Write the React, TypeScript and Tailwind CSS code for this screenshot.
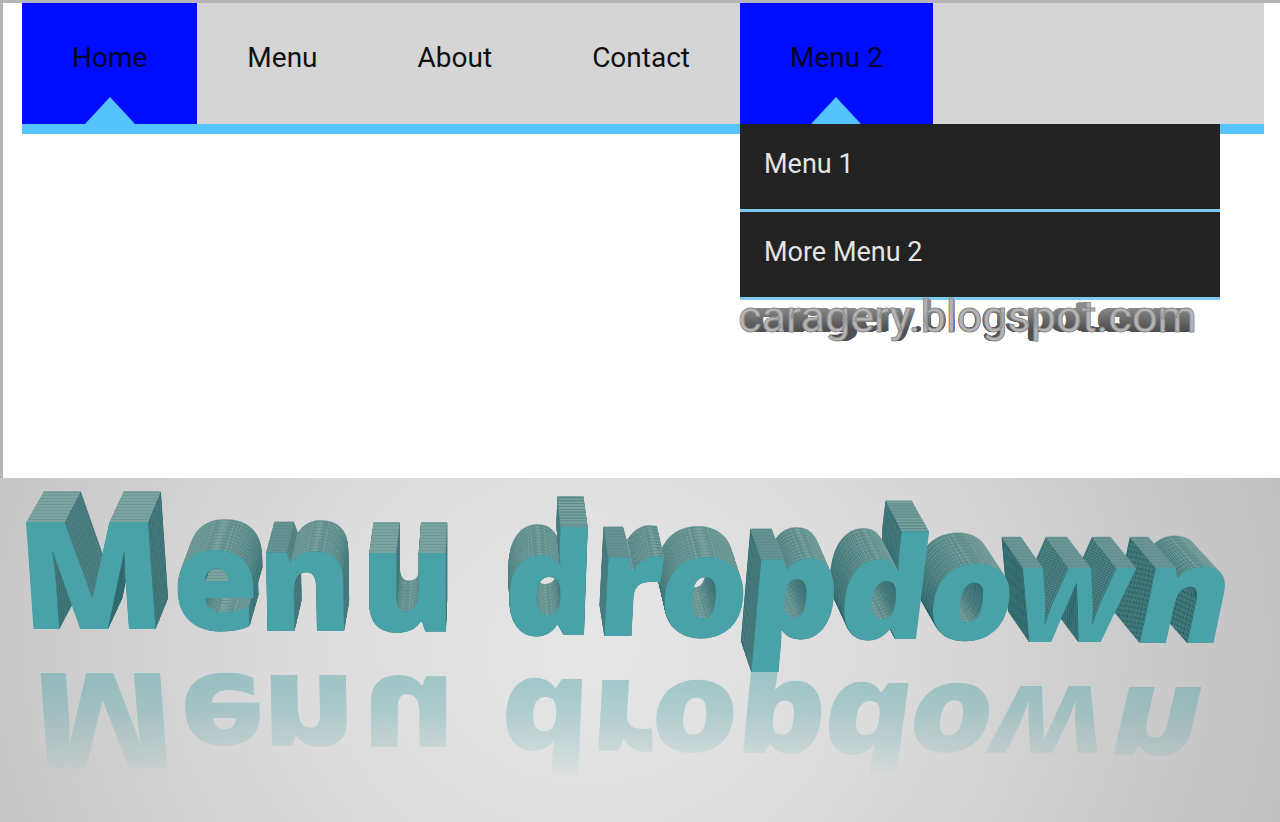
type NavItem = { label: string; active?: boolean; children?: string[] };

const navItems: NavItem[] = [
  { label: "Home", active: true },
  { label: "Menu" },
  { label: "About" },
  { label: "Contact" },
  { label: "Menu 2", active: true, children: ["Menu 1", "More Menu 2"] },
];

type Letter = { char: string; x: number; y: number; skew: number; face: string };

const capital = "text-[150px] font-extrabold";
const near = "text-[142px] font-extrabold";
const far = "text-[136px] font-extrabold";

const titleLetters: Letter[] = [
  { char: "M", x: 22, y: 151, skew: 4, face: capital },
  { char: "e", x: 173, y: 152, skew: 2, face: near },
  { char: "n", x: 258, y: 153, skew: 1, face: near },
  { char: "u", x: 360, y: 154, skew: 0, face: near },
  { char: "d", x: 502, y: 157, skew: -2, face: near },
  { char: "r", x: 595, y: 158, skew: -3, face: near },
  { char: "o", x: 656, y: 159, skew: -4, face: near },
  { char: "p", x: 745, y: 160, skew: -5, face: near },
  { char: "d", x: 834, y: 161, skew: -7, face: near },
  { char: "o", x: 922, y: 162, skew: -9, face: far },
  { char: "w", x: 1007, y: 164, skew: -11, face: "text-[136px] font-bold" },
  { char: "n", x: 1131, y: 165, skew: -12, face: far },
];

const titleDepth = Array.from({ length: 31 }, (_, i) => 31 - i);
const brandDepth = Array.from({ length: 20 }, (_, i) => 20 - i);

function Pointer() {
  return (
    <svg
      viewBox="0 0 50 27"
      className="absolute bottom-0 left-1/2 h-[27px] w-[50px] -translate-x-1/2 fill-[#55c3fd]"
      aria-hidden="true"
    >
      <path d="M25 0 50 27H0Z" />
    </svg>
  );
}

function Brand() {
  return (
    <svg viewBox="0 0 480 56" className="block w-full overflow-visible" role="img" aria-label="caragery.blogspot.com">
      <defs>
        <linearGradient id="brand-side" x1="0" y1="0" x2="0" y2="1">
          <stop offset="0.3" stopColor="#8a8a8a" />
          <stop offset="0.75" stopColor="#505050" />
        </linearGradient>
      </defs>
      {brandDepth.map((d) => {
        const k = 1 - d * 0.0043;
        return (
          <use
            key={d}
            href="#brand-face"
            fill="url(#brand-side)"
            transform={`translate(${225 * (1 - k)} ${24 * (1 - k)}) scale(${k})`}
          />
        );
      })}
      <g fill="#b4b4b4" stroke="#8b8b8b" strokeWidth="0.8">
        <text id="brand-face" x="-2" y="32" className="font-['Roboto',sans-serif] text-[45px]">
          caragery.blogspot.com
        </text>
      </g>
    </svg>
  );
}

function TitleArt() {
  return (
    <svg viewBox="0 0 1280 344" className="block w-full overflow-visible" role="img" aria-label="Menu dropdown">
      <defs>
        <linearGradient id="fade" gradientUnits="userSpaceOnUse" x1="0" y1="189" x2="0" y2="300">
          <stop offset="0" stopColor="#fff" stopOpacity="0.46" />
          <stop offset="0.4" stopColor="#fff" stopOpacity="0.34" />
          <stop offset="1" stopColor="#fff" stopOpacity="0" />
        </linearGradient>
        <mask id="reflection-mask" maskUnits="userSpaceOnUse" x="0" y="0" width="1280" height="344">
          <rect x="0" y="189" width="1280" height="155" fill="url(#fade)" />
        </mask>
      </defs>
      <g mask="url(#reflection-mask)" fill="#49a2a7">
        {titleLetters.map((l, i) => (
          <use
            key={i}
            href={`#letter-${i}`}
            transform={`translate(${480 + (l.x - 480) * 0.984} ${l.y + 44}) scale(0.98 -0.9) skewX(${-l.skew})`}
          />
        ))}
      </g>
      {titleDepth.map((d) => {
        const k = 1 - d * 0.00125;
        const shift = 480 * (1 - k);
        return (
          <g key={d}>
            <use href="#title-face" fill={d % 3 ? "#7da3a0" : "#6c9996"} transform={`translate(${shift} ${-d}) scale(${k} 1)`} />
            <use href="#title-face" fill={d % 3 ? "#27646a" : "#235a5e"} transform={`translate(${shift} ${1 - d}) scale(${k} 1)`} />
          </g>
        );
      })}
      <g fill="#49a2a7">
        <g id="title-face">
          {titleLetters.map((l, i) => (
            <g key={i} transform={`translate(${l.x} ${l.y}) skewX(${l.skew})`}>
              <text id={`letter-${i}`} className={`font-['Open_Sans','Noto_Sans',sans-serif] ${l.face}`}>
                {l.char}
              </text>
            </g>
          ))}
        </g>
      </g>
    </svg>
  );
}

export default function App() {
  return (
    <div className="flex min-h-screen flex-col bg-[#c4c4c4] font-['Roboto',sans-serif]">
      <header className="min-h-[478px] border-t-[3px] border-l-[3px] border-[#b5b5b5] bg-white pr-4 pl-[19px]">
        <nav className="border-b-[10px] border-[#55c3fd] bg-[#d5d5d5]">
          <ul className="flex">
            {navItems.map((item) => (
              <li key={item.label} className="relative">
                <a
                  href="#"
                  className={`relative block h-[121px] px-[50px] text-[28px] leading-[110px] whitespace-nowrap ${
                    item.active ? "bg-[#000cff] text-[#05052c]" : "text-[#111111]"
                  }`}
                >
                  {item.label}
                  {item.active && <Pointer />}
                </a>
                {item.children && (
                  <div className="absolute top-full left-0 w-[480px]">
                    <ul>
                      {item.children.map((child) => (
                        <li key={child} className="border-b-[3px] border-[#7dcbf0] bg-[#222222]">
                          <a href="#" className="block h-[85px] px-6 text-[27px] leading-[80px] text-[#e4e4e4]">
                            {child}
                          </a>
                        </li>
                      ))}
                    </ul>
                    <Brand />
                  </div>
                )}
              </li>
            ))}
          </ul>
        </nav>
      </header>
      <main className="flex-1 bg-[radial-gradient(ellipse_720px_620px_at_46%_50%,#e6e6e6_0%,#dcdcdc_40%,#c0c0c0_100%)]">
        <TitleArt />
      </main>
    </div>
  );
}
